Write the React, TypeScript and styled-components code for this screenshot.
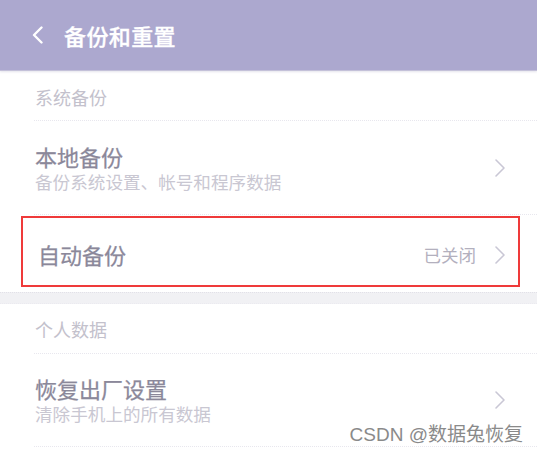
import React from "react";
import styled, { createGlobalStyle } from "styled-components";

const Global = createGlobalStyle`
  html, body { margin: 0; padding: 0; background: #ffffff; }
  body { font-family: "Noto Sans CJK SC", "Noto Sans", sans-serif; }
  * { box-sizing: border-box; }
`;

const Page = styled.div`
  position: relative;
  width: 537px;
  height: 450px;
  overflow: hidden;
  background: #ffffff;
`;

const Header = styled.header`
  height: 71px;
  background: #aca8cf;
  display: flex;
  align-items: center;
  padding-left: 31px;
  gap: 20px;
  border-bottom: 1px solid #c4c1d9;
  box-shadow: 0 1px 2px rgba(150, 146, 175, 0.25);
`;

const Title = styled.h1`
  margin: 0;
  font-size: 22px;
  line-height: 28px;
  font-weight: 500;
  letter-spacing: 0.4px;
  color: #ffffff;
  -webkit-text-stroke: 0.3px #ffffff;
`;

const SectionHeader = styled.div<{ $top: number; $h: number }>`
  height: ${(p) => p.$h}px;
  padding-top: ${(p) => p.$top}px;
  margin-left: 34px;
  border-bottom: 1px dotted #e8e7ee;
  font-size: 18px;
  line-height: 24px;
  color: #c3c1cc;
  padding-left: 1px;
`;

const Row = styled.div<{ $h: number }>`
  height: ${(p) => p.$h}px;
  margin-left: 34px;
  padding-right: 30px;
  padding-left: 1px;
  display: flex;
  align-items: center;
  border-bottom: 1px dotted #e8e7ee;
`;

const TextBlock = styled.div`
  flex: 1;
  display: flex;
  flex-direction: column;
`;

const ItemTitle = styled.div`
  font-size: 22px;
  line-height: 27px;
  color: #8b889a;
  -webkit-text-stroke: 0.25px #8b889a;
`;

const ItemSub = styled.div`
  font-size: 17.6px;
  line-height: 22px;
  margin-top: 1px;
  color: #c9c7d2;
`;

const HighlightRow = styled.div`
  height: 77px;
  padding: 1px 17px 5px 21px;
`;

const Highlight = styled.div`
  height: 71px;
  border: 2px solid #ef3a3a;
  display: flex;
  align-items: center;
  padding: 6px 11px 0 15px;
`;

const Value = styled.span`
  font-size: 17.5px;
  line-height: 24px;
  color: #b3b0be;
  margin-right: 17px;
`;

const Band = styled.div`
  height: 12px;
  background: #f1f1f4;
  border-top: 1px dotted #e2e1e8;
  border-bottom: 1px dotted #ebeaf0;
`;

const Watermark = styled.div`
  position: absolute;
  right: 14px;
  top: 422px;
  font-family: "Liberation Sans", "Noto Sans CJK SC", sans-serif;
  font-size: 19px;
  line-height: 26px;
  color: #8a8a8a;
  text-shadow: 0 0 2px #ffffff;
`;

const Chevron = () => (
  <svg width="14" height="20" viewBox="0 0 14 20" fill="none">
    <path d="M3 2 L11 10 L3 18" stroke="#c9c7d5" strokeWidth="1.6" strokeLinecap="round" strokeLinejoin="round" />
  </svg>
);

const BackIcon = () => (
  <svg width="13" height="18" viewBox="0 0 13 18" fill="none">
    <path d="M10.5 1.5 L3 9 L10.5 16.5" stroke="#ffffff" strokeWidth="2.4" strokeLinecap="round" strokeLinejoin="round" />
  </svg>
);

export default function App() {
  return (
    <Page>
      <Global />
      <Header>
        <BackIcon />
        <Title>备份和重置</Title>
      </Header>
      <SectionHeader $top={14} $h={50}>系统备份</SectionHeader>
      <Row $h={94}>
        <TextBlock>
          <ItemTitle>本地备份</ItemTitle>
          <ItemSub>备份系统设置、帐号和程序数据</ItemSub>
        </TextBlock>
        <Chevron />
      </Row>
      <HighlightRow>
        <Highlight>
          <TextBlock>
            <ItemTitle>自动备份</ItemTitle>
          </TextBlock>
          <Value>已关闭</Value>
          <Chevron />
        </Highlight>
      </HighlightRow>
      <Band />
      <SectionHeader $top={13} $h={50}>个人数据</SectionHeader>
      <Row $h={93}>
        <TextBlock>
          <ItemTitle>恢复出厂设置</ItemTitle>
          <ItemSub>清除手机上的所有数据</ItemSub>
        </TextBlock>
        <Chevron />
      </Row>
      <Watermark>CSDN @数据兔恢复</Watermark>
    </Page>
  );
}
